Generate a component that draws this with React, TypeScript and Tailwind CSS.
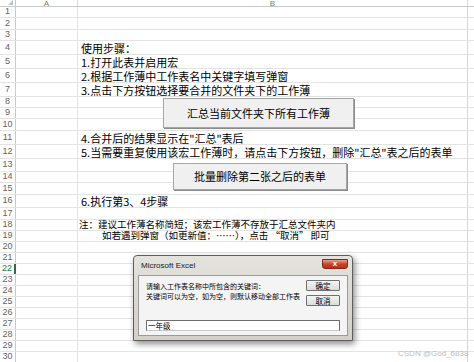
import React from 'react';

// row heights measured from the sheet (row 1..30)
const rowHeights = [11, 12, 11, 14, 14, 14, 14, 11, 11, 12, 14, 14, 13, 11, 12, 13, 12, 11, 11, 11, 11, 11, 11, 11, 11, 11, 11, 11, 11, 11];

const cellText: Record<number, React.ReactNode> = {
  4: '使用步骤：',
  5: '1.打开此表并启用宏',
  6: '2.根据工作薄中工作表名中关键字填写弹窗',
  7: '3.点击下方按钮选择要合并的文件夹下的工作薄',
  11: '4.合并后的结果显示在"汇总"表后',
  12: '5.当需要重复使用该宏工作薄时，请点击下方按钮，删除"汇总"表之后的表单',
  16: '6.执行第3、4步骤',
};

const cjk = { fontFamily: '"Noto Sans CJK SC", "Liberation Sans", sans-serif' };

export default function App() {
  return (
    <div className="relative w-[474px] h-[362px] overflow-hidden bg-white" style={cjk}>
      {/* column header */}
      <div className="flex h-[7px] border-b border-[#c9c9c9] text-[8px] leading-[7px] text-[#7a7a7a]">
        <div className="w-[16px] shrink-0 border-r border-[#c9c9c9] relative">
          <div className="absolute right-[2px] bottom-[1px] w-0 h-0 border-l-[5px] border-l-transparent border-b-[5px] border-b-[#c4c4c4]" />
        </div>
        <div className="w-[62px] shrink-0 border-r border-[#dcdcdc] text-center" style={{ fontFamily: '"Liberation Sans", sans-serif' }}>A</div>
        <div className="w-[390px] shrink-0 border-r border-[#dcdcdc] text-center" style={{ fontFamily: '"Liberation Sans", sans-serif' }}>B</div>
        <div className="flex-1" />
      </div>

      {rowHeights.map((h, i) => {
        const n = i + 1;
        const active = n === 22;
        return (
          <div key={n} className="flex border-b border-[#e3e3e3]" style={{ height: h }}>
            <div
              className={`w-[16px] shrink-0 flex items-center justify-center text-[9px] ${
                active ? 'text-[#217346] border-r-2 border-[#217346]' : 'text-[#5f5f5f] border-r border-[#c9c9c9]'
              }`}
              style={{ fontFamily: '"Liberation Sans", sans-serif' }}
            >
              {n}
            </div>
            <div className="w-[62px] shrink-0 border-r border-[#e3e3e3]" />
            <div className="w-[390px] shrink-0 border-r border-[#d6d6d6] flex items-end relative">
              {cellText[n] && (
                <span className="pl-[3px] text-[11px] leading-[12px] text-black whitespace-nowrap">{cellText[n]}</span>
              )}
              {n === 18 && (
                <span className="pl-[1px] text-[9.5px] leading-[11px] text-black whitespace-nowrap">
                  注：建议工作薄名称简短；该宏工作薄不存放于汇总文件夹内
                </span>
              )}
              {n === 19 && (
                <span className="pl-[24px] text-[9.5px] leading-[11px] text-black whitespace-nowrap">
                  如若遇到弹窗（如更新值：……），点击 “取消” 即可
                </span>
              )}
            </div>
            <div className="flex-1" />
          </div>
        );
      })}

      {/* form buttons on the sheet */}
      <button className="absolute left-[163px] top-[98px] w-[191px] h-[30px] bg-[#f0f0f0] border border-[#a6a6a6] shadow-[1px_1px_0_#8a8a8a] text-[11px] text-black flex items-center justify-center">
        汇总当前文件夹下所有工作薄
      </button>
      <button className="absolute left-[173px] top-[163px] w-[174px] h-[27px] bg-[#f0f0f0] border border-[#a6a6a6] shadow-[1px_1px_0_#8a8a8a] text-[11px] text-black flex items-center justify-center">
        批量删除第二张之后的表单
      </button>

      {/* input box dialog */}
      <div className="absolute left-[133px] top-[255px] w-[220px] h-[86px] rounded-t-[4px] border border-[#5e5e5e] bg-gradient-to-b from-[#e4e2dd] to-[#d3d0c9] shadow-[2px_3px_6px_rgba(0,0,0,0.45)] flex flex-col px-[4px] pb-[4px]">
        <div className="h-[19px] flex items-center justify-between shrink-0">
          <span className="text-[8px] text-[#1a1a1a] pl-[3px]" style={{ fontFamily: '"Liberation Sans", sans-serif' }}>
            Microsoft Excel
          </span>
          <div className="w-[26px] h-[10px] -mt-[4px] rounded-b-[3px] bg-gradient-to-b from-[#e8a08e] via-[#c9432c] to-[#b3321c] border border-[#7d2a1c] flex items-center justify-center text-white text-[8px] leading-none font-bold" style={{ fontFamily: '"Liberation Sans", sans-serif' }}>
            x
          </div>
        </div>
        <div className="flex-1 border border-[#9a9a9a] bg-[#f4f4f4] flex flex-col px-[7px] pt-[4px]">
          <div className="flex justify-between">
            <div className="text-[7px] leading-[10px] text-black pt-[1px] whitespace-nowrap">
              <div>请输入工作表名称中所包含的关键词：</div>
              <div>关键词可以为空，如为空，则默认移动全部工作表</div>
            </div>
            <div className="flex flex-col gap-[4px] w-[34px]">
              <div className="h-[11px] border border-[#707070] bg-gradient-to-b from-[#f4f4f4] to-[#dcdcdc] rounded-[1px] text-[7.5px] leading-[9px] text-center text-black">确定</div>
              <div className="h-[11px] border border-[#707070] bg-gradient-to-b from-[#f4f4f4] to-[#dcdcdc] rounded-[1px] text-[7.5px] leading-[9px] text-center text-black">取消</div>
            </div>
          </div>
          <div className="mt-auto mb-[4px] h-[11px] bg-white border border-[#6f6f6f] border-b-[#c8c8c8] text-[7.5px] leading-[9px] pl-[1px] text-black">
            一年级
          </div>
        </div>
      </div>

      <div className="absolute left-[398px] top-[348px] whitespace-nowrap text-[8px] text-[#bdbdbd]" style={{ fontFamily: '"Liberation Sans", sans-serif' }}>
        CSDN @God_6838
      </div>
    </div>
  );
}
